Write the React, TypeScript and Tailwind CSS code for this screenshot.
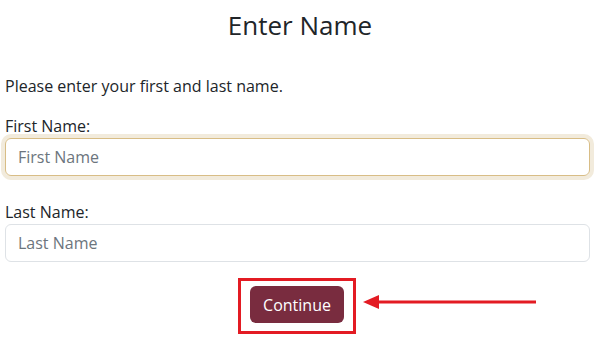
import { useState } from "react";

export default function App() {
  const [first, setFirst] = useState("");
  const [last, setLast] = useState("");

  return (
    <div className="w-[600px] h-[338px] bg-white px-[5px] text-[#212529] font-['Open_Sans',sans-serif] overflow-hidden">
      <h1 className="mt-[9px] text-center text-[26px] leading-[32px] font-normal">Enter Name</h1>

      <p className="mt-[33px] text-[16px] leading-[24px]">Please enter your first and last name.</p>

      <label className="mt-[16px] block text-[16px] leading-[24px]">First Name:</label>
      <input
        value={first}
        onChange={(e) => setFirst(e.target.value)}
        placeholder="First Name"
        className="block w-[585px] h-[38px] rounded-[6px] border border-[#d8bd86] px-3 text-[16px] outline-none ring-4 ring-[#f2ebdc] placeholder:text-[#6c757d]"
      />

      <label className="mt-[24px] block text-[16px] leading-[24px]">Last Name:</label>
      <input
        value={last}
        onChange={(e) => setLast(e.target.value)}
        placeholder="Last Name"
        className="block w-[585px] h-[38px] rounded-[6px] border border-[#dee2e6] px-3 text-[16px] outline-none placeholder:text-[#6c757d]"
      />

      <div className="relative mt-[16px] flex justify-center">
        <div className="ml-[-6px] border-[3px] border-[#e31b23] pt-[5px] pb-[8px] px-[9px]">
          <button className="h-[37px] w-[94px] rounded-[6px] bg-[#792c3f] text-[16px] text-white">Continue</button>
        </div>
        <svg className="absolute left-[358px] top-[16px]" width="175" height="16" viewBox="0 0 175 16">
          <line x1="14" y1="8" x2="173" y2="8" stroke="#e31b23" strokeWidth="3" />
          <polygon points="0,8 16,1 16,15" fill="#e31b23" />
        </svg>
      </div>
    </div>
  );
}
